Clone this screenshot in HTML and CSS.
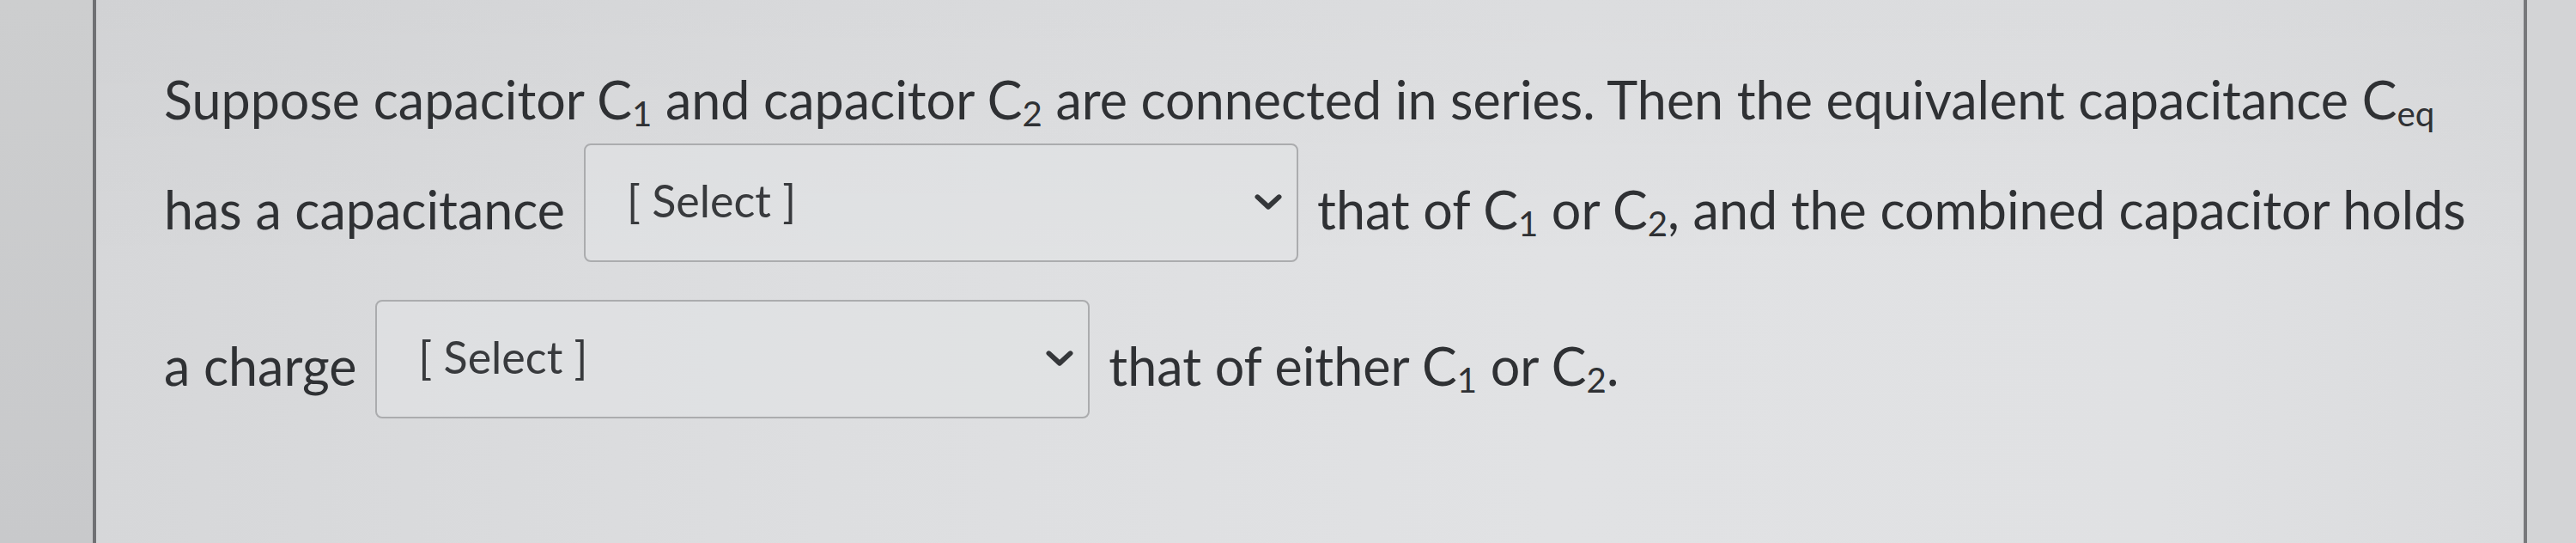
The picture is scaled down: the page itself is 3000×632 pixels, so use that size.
FILE: index.html
```html
<!DOCTYPE html>
<html lang="en">
<head>
<meta charset="utf-8">
<title>Question</title>
<link rel="stylesheet" href="styles.css">
</head>
<body>
<div class="screen">
  <div class="bezel bezel-left"></div>
  <main class="panel">
    <p class="question"><span class="seg">Suppose capacitor C<sub>1</sub> and capacitor C<sub>2</sub> are connected in series. Then the equivalent capacitance C<sub>eq</sub></span> <span class="seg">has a capacitance</span><span class="select"><span class="select-label">[ Select ]</span><svg class="chevron" viewBox="0 0 32 20" aria-hidden="true"><path d="M4 4 L16 15 L28 4" /></svg></span><span class="seg">that of C<sub>1</sub> or C<sub>2</sub>, and the combined capacitor holds</span> <span class="seg">a charge</span><span class="select"><span class="select-label">[ Select ]</span><svg class="chevron" viewBox="0 0 32 20" aria-hidden="true"><path d="M4 4 L16 15 L28 4" /></svg></span><span class="seg">that of either C<sub>1</sub> or C<sub>2</sub>.</span></p>
  </main>
  <div class="bezel bezel-right"></div>
</div>
</body>
</html>
```

FILE: styles.css
```css
html, body {
  margin: 0;
  padding: 0;
}

body {
  width: 3000px;
  height: 632px;
  overflow: hidden;
  background: #d6d7d9;
  font-family: Lato, "Open Sans", sans-serif;
}

.screen {
  display: flex;
  height: 632px;
}

.bezel-left {
  width: 108px;
  border-right: 4px solid #6f7073;
  background: linear-gradient(180deg, #cdcecf 0%, #c8c9cb 100%);
}

.bezel-right {
  width: 57px;
  border-left: 4px solid #77787b;
  background: #d3d4d6;
}

.panel {
  flex: 1;
  padding: 71px 40px 0 79px;
  background:
    linear-gradient(180deg, rgba(0, 0, 0, 0.025) 0%, rgba(0, 0, 0, 0) 50%),
    linear-gradient(90deg, #d6d7d9 0%, #dddee0 30%, #e1e2e4 60%, #e0e1e3 85%, #dadbdd 100%);
}

.question {
  margin: 0;
  font-size: 61px;
  line-height: 90px;
  color: #2f3134;
}

.question sub {
  font-size: 0.66em;
  line-height: 0;
  vertical-align: -0.2em;
}

.select {
  display: inline-flex;
  align-items: flex-start;
  justify-content: space-between;
  box-sizing: border-box;
  width: 832px;
  height: 138px;
  margin: 6px 22px 38px 22px;
  padding: 34px 16px 0 48px;
  border: 2px solid #abacae;
  border-radius: 8px;
  background: rgba(226, 227, 229, 0.55);
  vertical-align: 14px;
}

.select-label {
  font-size: 52px;
  line-height: 60px;
  color: #383a3d;
}

.chevron {
  width: 34px;
  height: 21px;
  margin-top: 22px;
  fill: none;
  stroke: #35373a;
  stroke-width: 5.5;
  stroke-linecap: round;
  stroke-linejoin: round;
}
```
